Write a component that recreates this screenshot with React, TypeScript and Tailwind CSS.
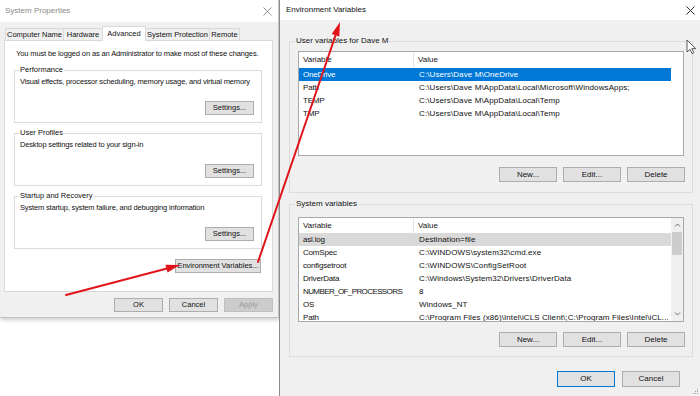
import React from 'react';

const USER_VARS = [
    { name: 'OneDrive', value: 'C:\\Users\\Dave M\\OneDrive' },
    { name: 'Path', value: 'C:\\Users\\Dave M\\AppData\\Local\\Microsoft\\WindowsApps;' },
    { name: 'TEMP', value: 'C:\\Users\\Dave M\\AppData\\Local\\Temp' },
    { name: 'TMP', value: 'C:\\Users\\Dave M\\AppData\\Local\\Temp' },
];

const SYSTEM_VARS = [
    { name: 'asl.log', value: 'Destination=file' },
    { name: 'ComSpec', value: 'C:\\WINDOWS\\system32\\cmd.exe' },
    { name: 'configsetroot', value: 'C:\\WINDOWS\\ConfigSetRoot' },
    { name: 'DriverData', value: 'C:\\Windows\\System32\\Drivers\\DriverData' },
    { name: 'NUMBER_OF_PROCESSORS', value: '8', nameCls: 'tracking-[-0.6px]' },
    { name: 'OS', value: 'Windows_NT' },
    { name: 'Path', value: 'C:\\Program Files (x86)\\Intel\\iCLS Client\\;C:\\Program Files\\Intel\\iCL...' },
];

const TABS = [
    { label: 'Computer Name', width: 'w-[59px]' },
    { label: 'Hardware', width: 'w-[40px]' },
    { label: 'Advanced', width: 'w-[44px]', active: true },
    { label: 'System Protection', width: 'w-[65px]' },
    { label: 'Remote', width: 'w-[31px]' },
];

type Row = { name: string; value: string; nameCls?: string; valueCls?: string };

function CloseIcon({ color }: { color: string }) {
    return (
        <svg width="9" height="9" viewBox="0 0 9 9" className="shrink-0">
            <path d="M0.5 0.5 L8.5 8.5 M8.5 0.5 L0.5 8.5" stroke={color} strokeWidth="0.9" />
        </svg>
    );
}

function Button({ label, className }: { label: string; className: string }) {
    return (
        <div className={`flex items-center justify-center border shrink-0 ${className}`}>
            {label}
        </div>
    );
}

function GroupBox({ title, desc }: { title: string; desc: string }) {
    return (
        <div className="relative mt-[10px] w-[248px] h-[53px] shrink-0 border border-[#dcdcdc] flex flex-col pl-[5px] pr-[7px] pt-[6px]">
            <span className="absolute -top-[6px] left-[4px] bg-white px-[1px]">{title}</span>
            <span className="tracking-[-0.16px]">{desc}</span>
            <Button
                label="Settings..."
                className="self-end mt-[14px] w-[49px] h-[14px] bg-[#e1e1e1] border-[#adadad]"
            />
        </div>
    );
}

function SystemProperties() {
    return (
        <div className="absolute left-0 top-0 w-[279px] h-[318px] flex flex-col bg-[#f0f0f0] border-r border-b border-[#c4c4c4] shadow-[1px_2px_4px_rgba(0,0,0,0.2)] text-[7.5px]">
            {/* Title bar */}
            <div className="h-[22px] shrink-0 bg-white flex items-center justify-between pl-[5px] pr-[6px]">
                <span className="text-[#8a8a8a] text-[8px]">System Properties</span>
                <CloseIcon color="#8a8a8a" />
            </div>

            <div className="flex-1 flex flex-col pl-[4px] pr-[5px] pt-[4px]">
                {/* Tabs */}
                <div className="h-[14px] flex items-end pl-[1px]">
                    {TABS.map((tab) =>
                        tab.active ? (
                            <div
                                key={tab.label}
                                className={`relative z-10 -ml-px -mb-px h-[15px] ${tab.width} bg-white border border-b-0 border-[#d9d9d9] flex items-center justify-center`}
                            >
                                {tab.label}
                            </div>
                        ) : (
                            <div
                                key={tab.label}
                                className={`-ml-px first:ml-0 h-[12px] ${tab.width} border border-b-0 border-[#d9d9d9] flex items-center justify-center`}
                            >
                                {tab.label}
                            </div>
                        )
                    )}
                </div>

                {/* Tab panel */}
                <div className="w-[269px] h-[252px] shrink-0 bg-white border border-[#d9d9d9] flex flex-col pl-[9px] pt-[8px]">
                    <span className="ml-[2px] tracking-[-0.12px]">
                        You must be logged on as an Administrator to make most of these changes.
                    </span>
                    <div className="mt-px" />
                    <GroupBox title="Performance" desc="Visual effects, processor scheduling, memory usage, and virtual memory" />
                    <GroupBox title="User Profiles" desc="Desktop settings related to your sign-in" />
                    <GroupBox title="Startup and Recovery" desc="System startup, system failure, and debugging information" />
                    <Button
                        label="Environment Variables..."
                        className="self-end mr-[11px] mt-[10px] w-[86px] h-[14px] bg-[#e1e1e1] border-[#adadad]"
                    />
                </div>

                {/* Dialog buttons */}
                <div className="mt-[6px] flex justify-end gap-[6px]">
                    <Button label="OK" className="w-[49px] h-[14px] bg-[#e1e1e1] border-[#adadad]" />
                    <Button label="Cancel" className="w-[49px] h-[14px] bg-[#e1e1e1] border-[#adadad]" />
                    <Button label="Apply" className="w-[49px] h-[14px] bg-[#cccccc] border-[#bfbfbf] text-[#9a9a9a]" />
                </div>
            </div>
        </div>
    );
}

function VarList({
    rows,
    height,
    header,
    selected,
    active,
    scrollbar,
}: {
    rows: Row[];
    height: string;
    header: string;
    selected: number;
    active: boolean;
    scrollbar?: boolean;
}) {
    return (
        <div className={`w-[386px] ${height} shrink-0 ml-[8px] border border-[#a8a8a8] bg-white flex overflow-hidden`}>
            <div className="w-[372px] flex flex-col">
                <div className={`${header} shrink-0 flex items-center`}>
                    <div className="w-[115px] h-full flex items-center pl-[4px] border-r border-[#e5e5e5]">Variable</div>
                    <div className="flex-1 h-full flex items-center pl-[4px]">Value</div>
                </div>
                {rows.map((row, i) => {
                    const isSel = i === selected;
                    const rowCls = isSel
                        ? active
                            ? 'bg-[#0078d7] text-white'
                            : 'bg-[#d9d9d9]'
                        : '';
                    return (
                        <div key={row.name + i} className={`h-[13px] shrink-0 flex items-center ${rowCls}`}>
                            <div className={`w-[115px] pl-[4px] overflow-hidden ${row.nameCls ?? 'tracking-[-0.2px]'}`}>
                                {row.name}
                            </div>
                            <div className={`w-[257px] pl-[5px] overflow-hidden ${row.valueCls ?? 'tracking-[0.1px]'}`}>
                                {row.value}
                            </div>
                        </div>
                    );
                })}
            </div>
            {scrollbar ? (
                <div className="w-[12px] bg-[#f0f0f0] flex flex-col items-center">
                    <svg width="7" height="12" viewBox="0 0 7 12" className="mt-[1px]">
                        <path d="M1 7.5 L3.5 5 L6 7.5" stroke="#606060" strokeWidth="0.9" fill="none" />
                    </svg>
                    <div className="w-[10px] h-[23px] bg-[#cdcdcd] mt-[1px]" />
                    <div className="flex-1" />
                    <svg width="7" height="12" viewBox="0 0 7 12" className="mb-[1px]">
                        <path d="M1 4.5 L3.5 7 L6 4.5" stroke="#606060" strokeWidth="0.9" fill="none" />
                    </svg>
                </div>
            ) : (
                <div className="w-[12px]" />
            )}
        </div>
    );
}

function ListButtons({ top }: { top: string }) {
    return (
        <div className={`${top} flex justify-end gap-[6px] pr-[7px]`}>
            <Button label="New..." className="w-[58px] h-[15px] bg-[#e1e1e1] border-[#adadad]" />
            <Button label="Edit..." className="w-[58px] h-[15px] bg-[#e1e1e1] border-[#adadad]" />
            <Button label="Delete" className="w-[58px] h-[15px] bg-[#e1e1e1] border-[#adadad]" />
        </div>
    );
}

function EnvironmentVariables() {
    return (
        <div className="absolute left-[279px] top-0 w-[421px] h-[396px] flex flex-col bg-[#f0f0f0] border-l border-[#8c8c8c]">
            <div className="h-[20px] shrink-0 bg-white flex items-center justify-between pl-[6px] pr-[5px]">
                <span className="text-[8px]">Environment Variables</span>
                <CloseIcon color="#1a1a1a" />
            </div>

            <div className="flex-1 flex flex-col pl-[9px] pt-[21px]">
                {/* User variables */}
                <div className="relative w-[404px] h-[152px] shrink-0 border border-[#dcdcdc] flex flex-col pt-[9px]">
                    <span className="absolute -top-[6px] left-[5px] bg-[#f0f0f0] px-[1px]">User variables for Dave M</span>
                    <VarList rows={USER_VARS} height="h-[105px]" header="h-[16px]" selected={0} active />
                    <ListButtons top="mt-[11px]" />
                </div>

                {/* System variables */}
                <div className="relative mt-[11px] w-[404px] h-[153px] shrink-0 border border-[#dcdcdc] flex flex-col pt-[12px]">
                    <span className="absolute -top-[6px] left-[5px] bg-[#f0f0f0] px-[1px]">System variables</span>
                    <VarList
                        rows={SYSTEM_VARS}
                        height="h-[105px]"
                        header="h-[15px]"
                        selected={0}
                        active={false}
                        scrollbar
                    />
                    <ListButtons top="mt-[10px]" />
                </div>

                <div className="mt-[14px] flex justify-end gap-[7px] pr-[20px]">
                    <Button label="OK" className="w-[58px] h-[16px] bg-[#e1e1e1] border-[#0078d7]" />
                    <Button label="Cancel" className="w-[58px] h-[16px] bg-[#e1e1e1] border-[#adadad]" />
                </div>
            </div>

            {/* Resize grip */}
            <svg width="8" height="8" viewBox="0 0 8 8" className="absolute right-[1px] bottom-[1px]">
                {[
                    [6, 2],
                    [6, 4],
                    [4, 4],
                    [6, 6],
                    [4, 6],
                    [2, 6],
                ].map(([x, y]) => (
                    <rect key={`${x}-${y}`} x={x} y={y} width="1" height="1" fill="#a0a0a0" />
                ))}
            </svg>
        </div>
    );
}

function Annotations() {
    return (
        <svg width="700" height="396" viewBox="0 0 700 396" className="absolute inset-0 pointer-events-none">
            {/* arrow to Environment Variables button */}
            <line x1="66" y1="295" x2="167" y2="268.5" stroke="#e2141b" strokeWidth="2" strokeLinecap="round" />
            <polygon points="180,265 167.5,272.4 165.4,264.7" fill="#e2141b" />
            {/* arrow to the Environment Variables dialog */}
            <line x1="258" y1="262" x2="335.5" y2="35.5" stroke="#e2141b" strokeWidth="2" strokeLinecap="round" />
            <polygon points="340,22 339.3,36.5 331.7,33.9" fill="#e2141b" />
            {/* mouse pointer */}
            <path
                d="M687 40 L687 52 L690 49.3 L692 53.5 L693.8 52.8 L691.9 48.6 L695.7 48.6 Z"
                fill="#ffffff"
                stroke="#333333"
                strokeWidth="0.8"
                strokeLinejoin="round"
            />
        </svg>
    );
}

export default function App() {
    return (
        <div className="relative w-[700px] h-[396px] overflow-hidden bg-white font-['Liberation_Sans',Arial,sans-serif] text-[8px] leading-[10px] text-[#111] whitespace-nowrap">
            <SystemProperties />
            <EnvironmentVariables />
            <Annotations />
        </div>
    );
}
